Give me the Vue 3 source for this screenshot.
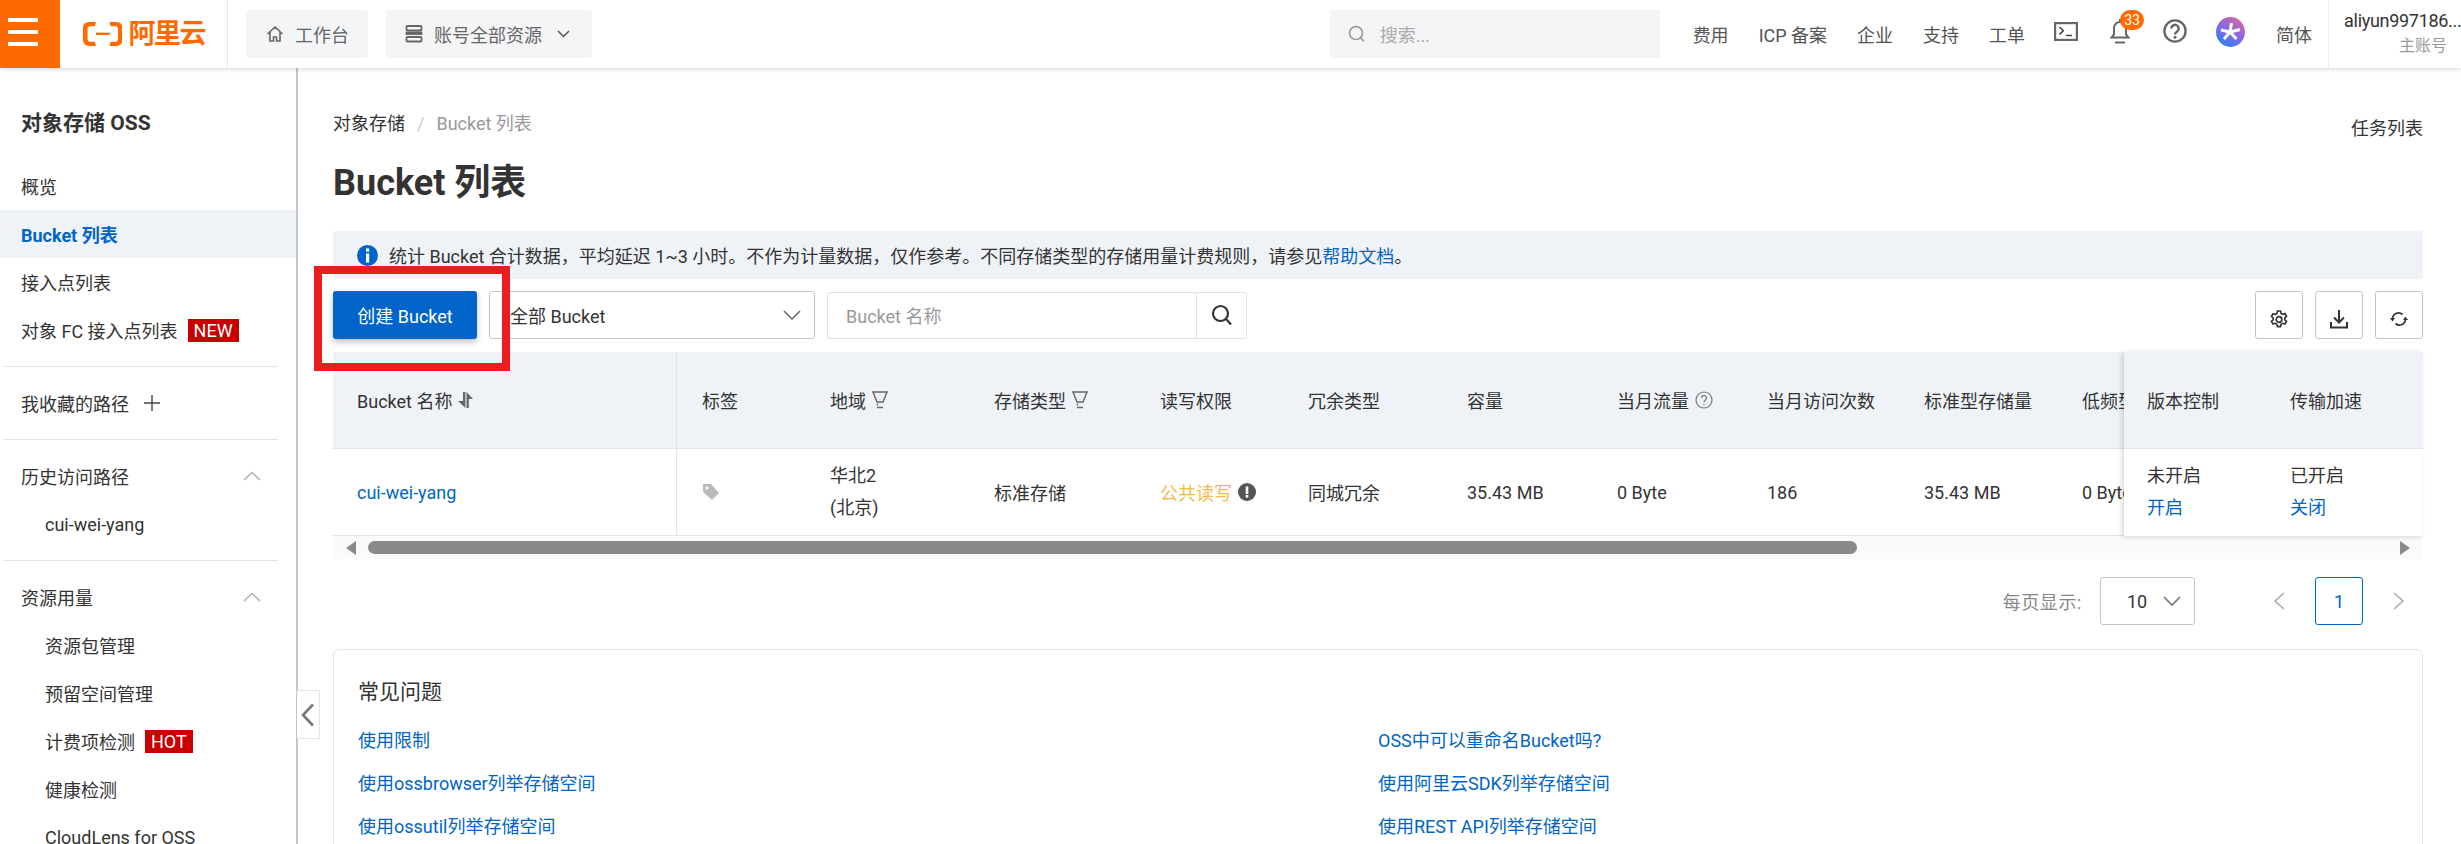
<template>
  <div class="page">
    <header class="topbar">
      <button class="burger"><i></i><i></i><i></i></button>
      <div class="logo">
        <svg width="43" height="26" viewBox="0 0 43 26" fill="#ff6a00">
          <path d="M14 0H7Q0 0 0 7v12q0 7 7 7h7l-1-4.500H7.500Q5 21.500 5 19V7q0-2.500 2.500-2.500H13z" />
          <path d="M29 0h7q7 0 7 7v12q0 7-7 7h-7l1-4.500h5.500q2.500 0 2.500-2.500V7q0-2.500-2.500-2.500H30z" />
          <rect x="14" y="11.500" width="15" height="2.600" />
        </svg>
        <span>阿里云</span>
      </div>
      <div class="top-sep"></div>
      <div class="top-btn work">
        <svg width="18" height="18" viewBox="0 0 18 18" fill="none" stroke="#666" stroke-width="1.600">
          <path d="M1.500 9 9 2l7.500 7M4 7v9h3.500v-4h3v4H14V7" />
        </svg>
        <span>工作台</span>
      </div>
      <div class="top-btn account">
        <svg width="18" height="18" viewBox="0 0 18 18" fill="none" stroke="#666" stroke-width="1.800">
          <rect x="1.500" y="1" width="15" height="4.500" rx="1" />
          <rect x="1.500" y="7.500" width="15" height="1.500" />
          <rect x="1.500" y="12" width="15" height="4.500" rx="1" />
        </svg>
        <span>账号全部资源</span>
        <svg class="acc-caret" width="13" height="8" viewBox="0 0 13 8" fill="none" stroke="#555" stroke-width="1.500">
          <path d="M1 1l5.500 5.500L12 1" />
        </svg>
      </div>
      <div class="top-search">
        <svg width="18" height="18" viewBox="0 0 18 18" fill="none" stroke="#999" stroke-width="1.600">
          <circle cx="8" cy="8" r="6.500" />
          <path d="M12.500 12.500 16 16.500" />
        </svg>
        <span>搜索...</span>
      </div>
      <nav class="top-nav">
        <a v-for="n in topLinks" :key="n">{{ n }}</a>
      </nav>
      <div class="top-icons">
        <svg width="24" height="19" viewBox="0 0 24 19" fill="none" stroke="#666" stroke-width="2.200">
          <rect x="1.100" y="1.100" width="21.800" height="16.800" />
          <path d="M5.500 5l3.800 3.700-3.800 3.700M12 13.500h6" stroke="#444" stroke-width="1.600" />
        </svg>
        <div class="bell">
          <svg width="20" height="26" viewBox="0 0 20 26" fill="none" stroke="#666" stroke-width="2">
            <path d="M1.500 19.500h17l-2.500-3V10a6 6 0 0 0-12 0v6.500zM10 1v3M5 24.500h10" />
          </svg>
          <b class="badge">33</b>
        </div>
        <svg class="help" width="24" height="24" viewBox="0 0 24 24" fill="none" stroke="#666" stroke-width="2.400">
          <circle cx="12" cy="12" r="10.600" />
          <path d="M8.300 9.500a3.700 3.700 0 1 1 5.900 3c-1.400 1-2.200 1.500-2.200 3" />
          <circle cx="12" cy="18.300" r="1.500" fill="#666" stroke="none" />
        </svg>
        <svg class="avatar" width="29" height="30" viewBox="0 0 29 30">
          <defs>
            <linearGradient id="ava" x1="0.850" y1="0.050" x2="0.300" y2="0.950">
              <stop offset="0" stop-color="#d9659f" />
              <stop offset="0.500" stop-color="#8a6ae0" />
              <stop offset="1" stop-color="#3a7cf2" />
            </linearGradient>
          </defs>
          <ellipse cx="14.500" cy="15" rx="14.500" ry="15" fill="url(#ava)" />
          <path d="M15.500 6 14 15l-6 7M14 15 5 13M14 15l10-2.500M14 15l6.500 7" stroke="#fff" stroke-width="3" fill="none" />
        </svg>
      </div>
      <span class="lang">简体</span>
      <div class="user">
        <div class="user-name">aliyun997186...</div>
        <div class="user-role">主账号</div>
      </div>
    </header>

    <div class="body">
      <aside class="sidebar">
        <h2 class="side-title">对象存储 OSS</h2>
        <div class="side-group first">
          <a class="side-item">概览</a>
          <a class="side-item active">Bucket 列表</a>
          <a class="side-item">接入点列表</a>
          <a class="side-item">对象 FC 接入点列表<em class="tag">NEW</em></a>
        </div>
        <div class="side-group">
          <a class="side-item">我收藏的路径
            <svg class="plus" width="18" height="18" viewBox="0 0 18 18" stroke="#444" stroke-width="1.400">
              <path d="M9 1v16M1 9h16" />
            </svg>
          </a>
        </div>
        <div class="side-group">
          <a class="side-item">历史访问路径
            <svg class="fold" width="18" height="10" viewBox="0 0 18 10" fill="none" stroke="#b5b5b5" stroke-width="1.600">
              <path d="M1 9l8-7.500L17 9" />
            </svg>
          </a>
          <a class="side-item sub">cui-wei-yang</a>
        </div>
        <div class="side-group">
          <a class="side-item">资源用量
            <svg class="fold" width="18" height="10" viewBox="0 0 18 10" fill="none" stroke="#b5b5b5" stroke-width="1.600">
              <path d="M1 9l8-7.500L17 9" />
            </svg>
          </a>
          <a class="side-item sub">资源包管理</a>
          <a class="side-item sub">预留空间管理</a>
          <a class="side-item sub">计费项检测<em class="tag">HOT</em></a>
          <a class="side-item sub">健康检测</a>
          <a class="side-item sub">CloudLens for OSS</a>
        </div>
      </aside>

      <main class="main">
        <div class="collapse">
          <svg width="14" height="24" viewBox="0 0 14 24" fill="none" stroke="#777" stroke-width="2.600">
            <path d="M12 1.500 2 12l10 10.500" />
          </svg>
        </div>

        <div class="crumb-row">
          <div class="crumbs"><span>对象存储</span><i>/</i><span class="cur">Bucket 列表</span></div>
          <a class="tasks">任务列表</a>
        </div>
        <h1 class="title">Bucket 列表</h1>

        <div class="notice">
          <svg width="21" height="21" viewBox="0 0 21 21">
            <circle cx="10.500" cy="10.500" r="10.500" fill="#0064c8" />
            <rect x="9" y="8.500" width="3.200" height="9" fill="#fff" />
            <rect x="9" y="3.500" width="3.200" height="3.200" fill="#fff" />
          </svg>
          <span>统计 Bucket 合计数据，平均延迟 1~3 小时。不作为计量数据，仅作参考。不同存储类型的存储用量计费规则，请参见<a>帮助文档</a>。</span>
        </div>

        <div class="toolbar">
          <div class="create-wrap">
            <button class="create">创建 Bucket</button>
            <div class="red-box"></div>
          </div>
          <div class="scope">
            <span>全部 Bucket</span>
            <svg width="18" height="10" viewBox="0 0 18 10" fill="none" stroke="#666" stroke-width="1.500">
              <path d="M1 1l8 8 8-8" />
            </svg>
          </div>
          <div class="name-search">
            <span class="ph">Bucket 名称</span>
            <div class="name-btn">
              <svg width="22" height="22" viewBox="0 0 22 22" fill="none" stroke="#333" stroke-width="2.200">
                <circle cx="9.500" cy="9.500" r="7.500" />
                <path d="M15 15l5 5.500" />
              </svg>
            </div>
          </div>
          <div class="tools">
            <div class="tool">
              <svg width="18" height="19" viewBox="0 0 18 19" fill="none" stroke="#333" stroke-width="1.700">
                <path d="M7.500 1h3l.6 2.400 1.600.9 2.300-.7 1.500 2.600-1.700 1.700v1.800l1.700 1.700-1.500 2.600-2.300-.7-1.600.9-.6 2.400h-3l-.6-2.400-1.600-.9-2.300.7-1.500-2.600 1.700-1.700V8L1.500 6.300 3 3.700l2.300.7 1.600-.9z" />
                <circle cx="9" cy="9.500" r="2.800" />
              </svg>
            </div>
            <div class="tool">
              <svg width="18" height="19" viewBox="0 0 18 19" fill="none" stroke="#333" stroke-width="2">
                <path d="M9 0v12M4 7.500l5 5 5-5M1 12v5.500h16V12" />
              </svg>
            </div>
            <div class="tool">
              <svg width="18" height="16" viewBox="0 0 18 16" fill="none" stroke="#333" stroke-width="1.700">
                <path d="M2.500 8a6 6 0 0 1 10-4.500M15.500 8a6 6 0 0 1-10 4.500" />
                <path d="M0 7h5L2.500 10.500zM13 9h5l-2.500-3.500z" fill="#333" stroke="none" />
              </svg>
            </div>
          </div>
        </div>

        <div class="table-box">
          <div class="table-clip">
            <div class="t-row t-head">
              <div v-for="(c, i) in columns" :key="c.label" class="t-cell" :class="{ split: i === 0 }">
                {{ c.label }}
                <svg v-if="c.icon === 'sort'" width="15" height="16" viewBox="0 0 15 16" fill="#666">
                  <path d="M5 0h2.400v16L0 9h5zM8.500 0 15 7h-4.200v9H8.500z" />
                </svg>
                <svg v-if="c.icon === 'filter'" width="16" height="18" viewBox="0 0 16 18" fill="none" stroke="#666" stroke-width="1.400">
                  <path d="M1 1h14l-4 10H5zM5.500 12.500v2M5 16.500h6" />
                </svg>
                <svg v-if="c.icon === 'help'" width="18" height="18" viewBox="0 0 18 18" fill="none" stroke="#777" stroke-width="1.200">
                  <circle cx="9" cy="9" r="8" />
                  <path d="M6.500 7a2.500 2.500 0 1 1 4 2c-1 .7-1.500 1-1.500 2.200M9 13v1.300" />
                </svg>
              </div>
            </div>
            <div class="t-row t-body">
              <div class="t-cell split"><a class="link">cui-wei-yang</a></div>
              <div class="t-cell">
                <svg width="18" height="18" viewBox="0 0 18 18" fill="#bbb">
                  <path d="M1 1h8l8 9-7 7-9-8z" />
                  <circle cx="5" cy="5" r="1.500" fill="#fff" />
                </svg>
              </div>
              <div class="t-cell two">华北2<br />(北京)</div>
              <div class="t-cell">标准存储</div>
              <div class="t-cell">
                <span class="warn">公共读写</span>
                <svg width="18" height="18" viewBox="0 0 18 18">
                  <circle cx="9" cy="9" r="9" fill="#555" />
                  <rect x="7.700" y="3.500" width="2.600" height="7.500" fill="#fff" />
                  <rect x="7.700" y="12" width="2.600" height="2.600" fill="#fff" />
                </svg>
              </div>
              <div class="t-cell">同城冗余</div>
              <div class="t-cell">35.43 MB</div>
              <div class="t-cell">0 Byte</div>
              <div class="t-cell">186</div>
              <div class="t-cell">35.43 MB</div>
              <div class="t-cell">0 Byte</div>
            </div>
          </div>

          <div class="pinned">
            <div class="pin-head"><span>版本控制</span><span>传输加速</span></div>
            <div class="pin-row">
              <div><p>未开启</p><a class="link">开启</a></div>
              <div><p>已开启</p><a class="link">关闭</a></div>
            </div>
          </div>

          <div class="scrollbar">
            <svg width="12" height="14" viewBox="0 0 12 14" fill="#8a8a8a"><path d="M11 0v14L1 7z" /></svg>
            <div class="track"><div class="thumb"></div></div>
            <svg width="12" height="14" viewBox="0 0 12 14" fill="#8a8a8a"><path d="M1 0v14l10-7z" /></svg>
          </div>
        </div>

        <div class="pager">
          <span class="per">每页显示:</span>
          <div class="size">
            <span>10</span>
            <svg width="18" height="11" viewBox="0 0 18 11" fill="none" stroke="#777" stroke-width="1.600">
              <path d="M1 1l8 8 8-8" />
            </svg>
          </div>
          <svg class="prev" width="12" height="18" viewBox="0 0 12 18" fill="none" stroke="#aaa" stroke-width="1.600">
            <path d="M11 1 2 9l9 8" />
          </svg>
          <div class="page-no">1</div>
          <svg class="next" width="12" height="18" viewBox="0 0 12 18" fill="none" stroke="#aaa" stroke-width="1.600">
            <path d="M1 1l9 8-9 8" />
          </svg>
        </div>

        <section class="faq">
          <h3>常见问题</h3>
          <div class="faq-grid">
            <a v-for="q in faqs" :key="q" class="link">{{ q }}</a>
          </div>
        </section>
      </main>
    </div>
  </div>
</template>

<script setup>
const topLinks = ["费用", "ICP 备案", "企业", "支持", "工单"];

const columns = [
  { label: "Bucket 名称", icon: "sort" },
  { label: "标签" },
  { label: "地域", icon: "filter" },
  { label: "存储类型", icon: "filter" },
  { label: "读写权限" },
  { label: "冗余类型" },
  { label: "容量" },
  { label: "当月流量", icon: "help" },
  { label: "当月访问次数" },
  { label: "标准型存储量" },
  { label: "低频型存储量" },
];

const faqs = [
  "使用限制",
  "OSS中可以重命名Bucket吗?",
  "使用ossbrowser列举存储空间",
  "使用阿里云SDK列举存储空间",
  "使用ossutil列举存储空间",
  "使用REST API列举存储空间",
];
</script>

<style>
html,
body {
  margin: 0;
  background: #fff;
  overflow: hidden;
}
</style>

<style scoped>
.page {
  width: 2461px;
  height: 844px;
  overflow: hidden;
  display: flex;
  flex-direction: column;
  font-family: "Roboto", "Noto Sans CJK SC", sans-serif;
  font-size: 18px;
  color: #333;
}
a {
  cursor: pointer;
}
.link {
  color: #0064c8;
}

/* top bar */
.topbar {
  position: relative;
  z-index: 2;
  flex: 0 0 68px;
  display: flex;
  align-items: center;
  background: #fff;
  box-shadow: 0 1px 5px rgba(0, 0, 0, 0.16);
}
.burger {
  width: 60px;
  height: 68px;
  border: 0;
  padding: 0 22px 4px 8px;
  background: #ff6a00;
  display: flex;
  flex-direction: column;
  justify-content: center;
  gap: 8px;
}
.burger i {
  display: block;
  height: 4px;
  background: #fff;
}
.logo {
  margin-left: 23px;
  width: 122px;
  display: flex;
  align-items: center;
  gap: 6px;
  color: #ff6a00;
  font-size: 27px;
  font-weight: 700;
  letter-spacing: -1.500px;
  line-height: 1;
  white-space: nowrap;
}
.top-sep {
  width: 1px;
  height: 68px;
  margin: 0 18px 0 22px;
  background: #e8e8e8;
}
.top-btn {
  height: 48px;
  display: flex;
  align-items: center;
  background: #f4f5f7;
  border-radius: 3px;
  color: #666;
}
.work {
  width: 122px;
  padding-left: 20px;
  gap: 11px;
  box-sizing: border-box;
}
.account {
  width: 206px;
  margin-left: 18px;
  padding-left: 19px;
  gap: 11px;
  box-sizing: border-box;
}
.acc-caret {
  margin-left: 4px;
}
.top-search {
  width: 330px;
  height: 48px;
  margin-left: 738px;
  padding-left: 18px;
  box-sizing: border-box;
  display: flex;
  align-items: center;
  gap: 14px;
  background: #f4f5f7;
  color: #aaa;
}
.top-nav {
  margin-left: 33px;
  display: flex;
  gap: 30px;
  color: #555;
  white-space: nowrap;
}
.top-icons {
  margin-left: 29px;
  margin-bottom: 6px;
  display: flex;
  align-items: center;
}
.bell {
  position: relative;
  height: 26px;
  margin-left: 32px;
}
.badge {
  position: absolute;
  left: 10px;
  top: -8px;
  width: 24px;
  height: 20px;
  border-radius: 10px;
  background: #ff6a00;
  color: #fff;
  font-size: 14px;
  font-weight: 400;
  line-height: 20px;
  text-align: center;
}
.help {
  margin-left: 33px;
}
.avatar {
  margin-left: 29px;
  margin-top: 2px;
}
.lang {
  margin-left: 31px;
  color: #555;
  white-space: nowrap;
}
.user {
  width: 133px;
  height: 68px;
  margin-left: 16px;
  padding-left: 15px;
  box-sizing: border-box;
  border-left: 1px solid #eee;
  overflow: hidden;
  white-space: nowrap;
}
.user-name {
  margin-top: 8px;
  line-height: 26px;
  letter-spacing: -0.3px;
}
.user-role {
  margin-left: 55px;
  font-size: 16px;
  line-height: 24px;
  color: #999;
}

/* sidebar */
.body {
  flex: 1;
  display: flex;
  min-height: 0;
}
.sidebar {
  flex: 0 0 296px;
  border-right: 2px solid #c4c6cf;
  padding-top: 38px;
}
.side-title {
  margin: 0 0 22px 21px;
  font-size: 21px;
  line-height: 34px;
  font-weight: 700;
}
.side-group {
  margin-left: 3px;
  width: 275px;
  padding: 12px 0;
  border-bottom: 1px solid #e5e5e5;
}
.side-group.first {
  padding-top: 0;
}
.side-group:last-child {
  border-bottom: 0;
}
.side-item {
  position: relative;
  height: 48px;
  padding-left: 18px;
  display: flex;
  align-items: center;
  white-space: nowrap;
}
.first .side-item {
  margin-left: -3px;
  padding-left: 21px;
}
.first .side-item.active {
  width: 275px;
  background: #eff3f8;
  color: #0064c8;
  font-weight: 700;
}
.side-item.sub {
  padding-left: 42px;
}
.tag {
  margin-left: 10px;
  height: 23px;
  padding: 0 6px;
  background: #c80000;
  color: #fff;
  font-style: normal;
  line-height: 23px;
}
.plus {
  margin-left: 14px;
}
.fold {
  position: absolute;
  left: 240px;
  top: 19px;
}

/* main */
.main {
  position: relative;
  flex: 1;
  min-width: 0;
  padding: 42px 38px 0 35px;
}
.collapse {
  position: absolute;
  left: -1px;
  top: 622px;
  width: 23px;
  height: 49px;
  display: flex;
  align-items: center;
  justify-content: center;
  background: #fff;
  border: 1px solid #e5e5e5;
  border-left: 0;
  box-sizing: border-box;
}
.crumb-row {
  display: flex;
  justify-content: space-between;
  line-height: 28px;
}
.crumbs i {
  margin: 0 12px;
  color: #ccc;
  font-style: normal;
}
.cur {
  color: #999;
}
.tasks {
  margin-top: 5px;
}
.title {
  margin: 15px 0 0;
  font-size: 36px;
  line-height: 50px;
  font-weight: 700;
}
.notice {
  height: 48px;
  margin-top: 23px;
  padding-left: 24px;
  display: flex;
  align-items: center;
  gap: 11px;
  background: #eff3f8;
  border-radius: 3px;
  white-space: nowrap;
}
.notice a {
  color: #0064c8;
}
.toolbar {
  height: 48px;
  margin-top: 12px;
  display: flex;
  align-items: center;
}
.create-wrap {
  position: relative;
}
.create {
  display: block;
  width: 144px;
  height: 48px;
  border: 0;
  border-radius: 3px;
  background: #0064c8;
  color: #fff;
  font: inherit;
  box-shadow: 0 3px 6px rgba(0, 0, 0, 0.25);
}
.red-box {
  position: absolute;
  left: -19px;
  top: -25px;
  width: 196px;
  height: 105px;
  border: 8px solid #ec1c1f;
  box-sizing: border-box;
  z-index: 1;
}
.scope {
  width: 326px;
  height: 48px;
  margin-left: 12px;
  padding: 0 13px 0 20px;
  box-sizing: border-box;
  display: flex;
  align-items: center;
  justify-content: space-between;
  border: 1px solid #c4c6cf;
  border-radius: 3px;
}
.name-search {
  width: 420px;
  height: 47px;
  margin-left: 12px;
  box-sizing: border-box;
  display: flex;
  align-items: center;
  border: 1px solid #dfe1e6;
  border-radius: 3px;
}
.ph {
  flex: 1;
  padding-left: 18px;
  color: #999;
}
.name-btn {
  width: 49px;
  height: 100%;
  display: flex;
  align-items: center;
  justify-content: center;
  border-left: 1px solid #dfe1e6;
}
.tools {
  margin-left: auto;
  display: flex;
  gap: 12px;
}
.tool {
  width: 48px;
  height: 48px;
  padding-top: 8px;
  box-sizing: border-box;
  display: flex;
  align-items: center;
  justify-content: center;
  border: 1px solid #c4c6cf;
  border-radius: 3px;
}

/* table */
.table-box {
  position: relative;
  margin-top: 13px;
}
.table-clip {
  overflow: hidden;
}
.t-row {
  display: grid;
  grid-template-columns: 344px 128px 164px 166px 148px 159px 150px 150px 157px 158px 160px;
  box-sizing: border-box;
  border-bottom: 1px solid #e3e4e8;
}
.t-head {
  height: 97px;
  background: #eff3f8;
}
.t-body {
  height: 87px;
}
.t-cell {
  display: flex;
  align-items: center;
  gap: 6px;
  padding-left: 25px;
  box-sizing: border-box;
  white-space: nowrap;
}
.t-cell.split {
  border-right: 1px solid #e3e4e8;
  padding-left: 24px;
}
.t-cell.two {
  display: block;
  align-self: center;
  line-height: 32px;
}
.warn {
  color: #f7b94a;
}
.pinned {
  position: absolute;
  right: 0;
  top: 0;
  width: 299px;
  height: 184px;
  background: #fff;
  box-shadow: -2px 1px 5px rgba(0, 0, 0, 0.16);
}
.pin-head {
  height: 97px;
  padding-left: 23px;
  box-sizing: border-box;
  display: flex;
  align-items: center;
  background: #eff3f8;
  border-bottom: 1px solid #e3e4e8;
  overflow: hidden;
}
.pin-head span {
  flex: 0 0 143px;
}
.pin-row {
  display: flex;
  padding: 11px 0 0 23px;
  line-height: 32px;
  overflow: hidden;
}
.pin-row > div {
  flex: 0 0 143px;
}
.pin-row p {
  margin: 0;
}
.scrollbar {
  height: 23px;
  padding: 0 12px;
  display: flex;
  align-items: center;
  background: #fafafa;
}
.track {
  flex: 1;
  padding: 0 0 0 11px;
}
.thumb {
  width: 1489px;
  height: 13px;
  border-radius: 7px;
  background: #8a8a8a;
}

/* pager */
.pager {
  height: 48px;
  margin-top: 18px;
  display: flex;
  align-items: center;
}
.per {
  margin-left: auto;
  color: #888;
  letter-spacing: 0.6px;
}
.size {
  width: 95px;
  height: 48px;
  margin-left: 18px;
  box-sizing: border-box;
  padding: 0 13px 0 26px;
  display: flex;
  align-items: center;
  justify-content: space-between;
  border: 1px solid #c4c6cf;
  border-radius: 3px;
}
.prev {
  margin-left: 78px;
}
.page-no {
  width: 48px;
  height: 48px;
  margin-left: 30px;
  box-sizing: border-box;
  display: flex;
  align-items: center;
  justify-content: center;
  border: 1px solid #0064c8;
  border-radius: 3px;
  color: #0064c8;
}
.next {
  margin: 0 18px 0 30px;
}

/* faq */
.faq {
  margin-top: 24px;
  padding: 24px 24px 0;
  height: 300px;
  box-sizing: border-box;
  border: 1px solid #e3e4e8;
  border-radius: 6px;
}
.faq h3 {
  margin: 0;
  font-size: 21px;
  line-height: 36px;
  font-weight: 400;
}
.faq-grid {
  margin-top: 7px;
  display: grid;
  grid-template-columns: 1020px 1fr;
  grid-auto-rows: 43px;
  align-items: center;
}
</style>
